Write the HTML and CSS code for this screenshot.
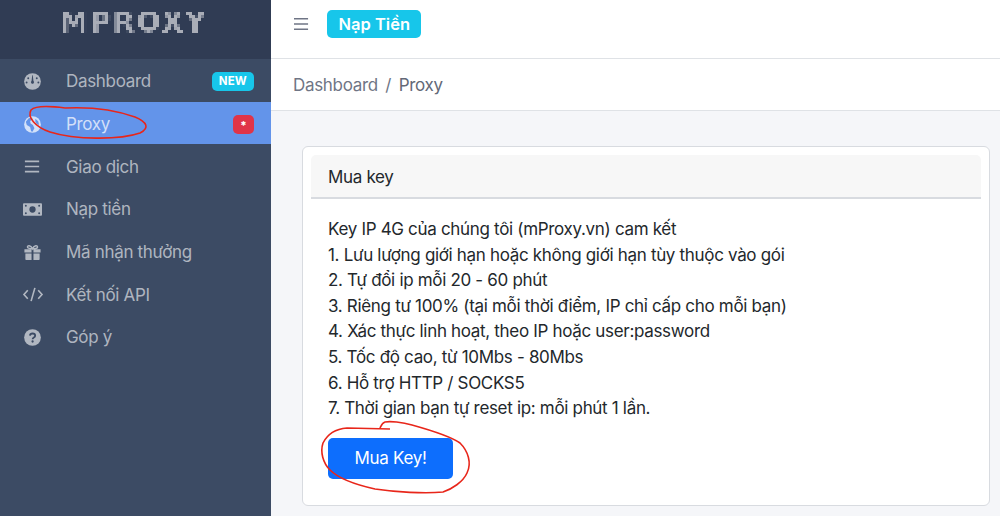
FILE: index.html
```html
<!DOCTYPE html>
<html lang="vi">
<head>
<meta charset="utf-8">
<title>mProxy</title>
<link rel="stylesheet" href="styles.css">
</head>
<body>
<svg class="defs" width="0" height="0">
  <filter id="pixelate" x="0" y="0" width="100%" height="100%" color-interpolation-filters="sRGB">
    <feFlood x="1" y="1" width="1" height="1" flood-color="#fff"/>
    <feComposite width="3" height="3"/>
    <feTile result="grid"/>
    <feComposite in="SourceGraphic" in2="grid" operator="in"/>
    <feMorphology operator="dilate" radius="1"/>
  </filter>
</svg>
<div class="app">
  <aside class="sidebar">
    <div class="brand"><span class="logo">MPROXY</span></div>
    <nav class="nav">
      <a class="nav-item">
        <svg class="nav-icon" viewBox="0 0 20 20"><circle cx="10" cy="10" r="8.8" fill="currentColor"/><path d="M9 9.5 9.7 3.5h.6l.7 6a1.6 1.6 0 1 1-2 0z" fill="#3c4b64"/><circle cx="5.5" cy="6.5" r="1" fill="#3c4b64"/><circle cx="14.5" cy="6.5" r="1" fill="#3c4b64"/><circle cx="3.8" cy="11" r="1" fill="#3c4b64"/><circle cx="16.2" cy="11" r="1" fill="#3c4b64"/></svg>
        <span class="nav-label">Dashboard</span>
        <span class="badge badge-info">NEW</span>
      </a>
      <a class="nav-item active">
        <svg class="nav-icon" viewBox="0 0 20 20"><circle cx="10" cy="10" r="8.8" fill="currentColor"/><path d="M3 7l3-3.5 3.5-.8.5 2-2.5 1.5L8 9l2.5 1.5L12 14l-2 3.5-1.5-.5L7.500 12.500 4 10.500zM13 4l3 2.500 1 4-2.500-1-1.500-2.500z" fill="#6394ea"/></svg>
        <span class="nav-label">Proxy</span>
        <span class="badge badge-danger">*</span>
      </a>
      <a class="nav-item">
        <svg class="nav-icon" viewBox="0 0 20 20"><path d="M2 4.500h15M2 10h15M2 15.500h15" stroke="currentColor" stroke-width="1.800" fill="none"/></svg>
        <span class="nav-label">Giao dịch</span>
      </a>
      <a class="nav-item">
        <svg class="nav-icon" viewBox="0 0 20 20"><rect x="0" y="3.500" width="20" height="13" rx="1" fill="currentColor"/><circle cx="10" cy="10" r="3.300" fill="#3c4b64"/><circle cx="3" cy="6" r="1" fill="#3c4b64"/><circle cx="17" cy="6" r="1" fill="#3c4b64"/><circle cx="3" cy="14" r="1" fill="#3c4b64"/><circle cx="17" cy="14" r="1" fill="#3c4b64"/></svg>
        <span class="nav-label">Nạp tiền</span>
      </a>
      <a class="nav-item">
        <svg class="nav-icon" viewBox="0 0 20 20"><path d="M1.500 6.500h7.500v3.500H1.500zM11 6.500h7.500v3.500H11zM2.500 11H9v7H3.300a.8.800 0 0 1-.8-.8zM11 11h6.500v6.200a.8.800 0 0 1-.8.800H11z" fill="currentColor"/><path d="M10 6C8 2 4.500 2 4.800 4.500 5 6 8 6 10 6c2 0 5 0 5.200-1.500C15.500 2 12 2 10 6z" fill="none" stroke="currentColor" stroke-width="1.600"/></svg>
        <span class="nav-label">Mã nhận thưởng</span>
      </a>
      <a class="nav-item">
        <svg class="nav-icon nav-icon-wide" viewBox="0 0 22 20"><path d="M5.500 5.500 1.500 10l4 4.500M16.500 5.500l4 4.500-4 4.500M13 3 9 17" fill="none" stroke="currentColor" stroke-width="1.700"/></svg>
        <span class="nav-label">Kết nối API</span>
      </a>
      <a class="nav-item">
        <svg class="nav-icon" viewBox="0 0 20 20"><circle cx="10" cy="10" r="8.800" fill="currentColor"/><path d="M7.300 8C7.500 6.500 8.600 5.800 10 5.800c1.600 0 2.800.9 2.800 2.300 0 2-2.700 1.900-2.700 3.700" fill="none" stroke="#3c4b64" stroke-width="1.900"/><circle cx="10.100" cy="14.200" r="1.200" fill="#3c4b64"/></svg>
        <span class="nav-label">Góp ý</span>
      </a>
    </nav>
  </aside>
  <main class="main">
    <header class="topbar">
      <svg class="burger" viewBox="0 0 16 14"><path d="M0 1.500h15M0 7h15M0 12.500h15" stroke="currentColor" stroke-width="1.600" fill="none"/></svg>
      <a class="topup">Nạp Tiền</a>
    </header>
    <div class="crumbs">
      <span class="crumb-link">Dashboard</span>
      <span class="crumb-sep">/</span>
      <span class="crumb-current">Proxy</span>
    </div>
    <section class="content">
      <div class="card">
        <div class="card-header">Mua key</div>
        <div class="card-body">
          <p>Key IP 4G của chúng tôi (mProxy.vn) cam kết</p>
          <p>1. Lưu lượng giới hạn hoặc không giới hạn tùy thuộc vào gói</p>
          <p>2. Tự đổi ip mỗi 20 - 60 phút</p>
          <p>3. Riêng tư 100% (tại mỗi thời điểm, IP chỉ cấp cho mỗi bạn)</p>
          <p>4. Xác thực linh hoạt, theo IP hoặc user:password</p>
          <p>5. Tốc độ cao, từ 10Mbs - 80Mbs</p>
          <p>6. Hỗ trợ HTTP / SOCKS5</p>
          <p>7. Thời gian bạn tự reset ip: mỗi phút 1 lần.</p>
          <button class="buy">Mua Key!</button>
        </div>
      </div>
    </section>
  </main>
</div>
<svg class="ink" viewBox="0 0 1000 516">
  <path d="M65 108C50 106 35 106 31 110 27 117 35 127 50 132 75 140 120 140 140 133 150 128 147 122 135 117 110 108 85 107 65 108"/>
  <path d="M390 429 347 428C335 429 327 435 323 443 320 452 323 463 330 470 340 480 357 485 375 489 395 492 425 494 443 492 452 489 463 482 467 473 472 463 468 451 460 443 450 436 430 430 412 425 402 422 390 421 385 422 382 423 381 426 380 428"/>
</svg>
</body>
</html>
```
FILE: styles.css
```css
* { box-sizing: border-box; }
html, body { margin: 0; height: 100%; overflow: hidden; }
body {
  font-family: Inter, "Liberation Sans", sans-serif;
  font-size: 17px;
  letter-spacing: -.32px;
  color: #23282c;
  background: #f5f6f9;
}
.defs { position: absolute; }
.app { display: flex; height: 516px; }
.sidebar { width: 271px; flex: none; background: #3c4b64; color: rgba(255,255,255,.6); }
.brand {
  height: 59px;
  background: #303c54;
  display: flex;
  justify-content: center;
  align-items: flex-start;
}
.logo {
  font-family: "DejaVu Sans", sans-serif;
  font-weight: 700;
  font-size: 28px;
  line-height: 46px;
  letter-spacing: 2.300px;
  color: #a9adb7;
  filter: url(#pixelate);
  padding: 0 3px 0 0;
}
.nav { display: flex; flex-direction: column; }
.nav-item {
  height: 42.700px;
  display: flex;
  align-items: center;
  padding: 2px 17px 0 23px;
}
.nav-item.active { background: #6394ea; color: rgba(255,255,255,.72); }
.nav-icon { width: 19px; height: 19px; flex: none; margin-right: 24px; }
.nav-icon-wide { width: 22px; margin-left: -1.500px; margin-right: 22.500px; }
.nav-label { flex: 1; font-size: 17px; }
.badge {
  border-radius: 5px;
  color: #fff;
  font-weight: 700;
  font-size: 11.500px;
  letter-spacing: .2px;
  line-height: 19px;
  height: 19px;
  padding: 0 7px;
  overflow: hidden;
}
.badge-info { background: #17c6ea; }
.badge-danger { background: #e03448; padding: 0 7px; line-height: 22px; }
.main { flex: 1; min-width: 0; display: flex; flex-direction: column; }
.topbar {
  height: 59px;
  background: #fff;
  border-bottom: 1px solid #dfe2e6;
  display: flex;
  align-items: flex-start;
  padding: 10px 0 0 23px;
  flex: none;
}
.burger { width: 15px; height: 14px; color: #6f7585; margin: 7px 18px 0 0; }
.topup {
  background: #17c6ea;
  color: #fff;
  font-weight: 600;
  font-size: 16.500px;
  letter-spacing: 0;
  height: 28px;
  line-height: 28px;
  padding: 0 11px 0 11.500px;
  border-radius: 5px;
}
.crumbs {
  height: 52px;
  flex: none;
  background: #fff;
  border-bottom: 1px solid #dfe2e6;
  display: flex;
  align-items: center;
  gap: 7.500px;
  padding: 0 0 0 22px;
}
.crumb-link { color: #6f7585; }
.crumb-sep { color: #6f7585; }
.crumb-current { color: #636977; }
.content { flex: 1; padding: 35px 10px 11px 31px; min-height: 0; }
.card {
  height: 360px;
  background: #fff;
  border: 1px solid #d8dbe0;
  border-radius: 6px;
  padding: 8px;
}
.card-header {
  height: 44px;
  line-height: 45px;
  background: #f7f7f7;
  border-bottom: 2px solid #d8dbe0;
  border-radius: 5px 5px 0 0;
  padding: 0 17px;
}
.card-body { padding: 18px 17px 0; }
.card-body p { margin: 0; line-height: 25.600px; }
.buy {
  display: block;
  margin-top: 16px;
  width: 125px;
  height: 41px;
  border: 0;
  border-radius: 5px;
  background: #0d6efd;
  color: #fff;
  font: inherit;
  letter-spacing: inherit;
}
.ink {
  position: absolute;
  left: 0;
  top: 0;
  width: 1000px;
  height: 516px;
  pointer-events: none;
  fill: none;
  stroke: #e8261a;
  stroke-width: 1.600;
}
```
